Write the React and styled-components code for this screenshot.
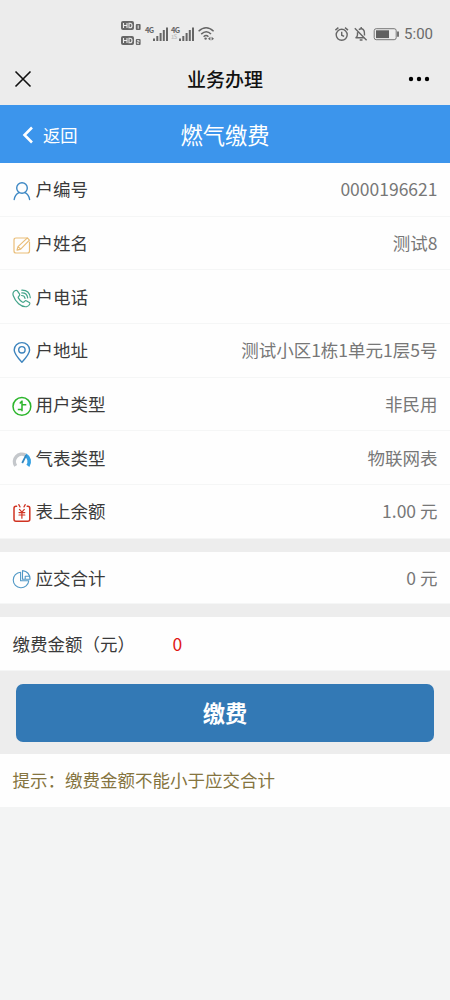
import styled, { createGlobalStyle } from 'styled-components';

const GlobalStyle = createGlobalStyle`
  * {
    box-sizing: border-box;
  }
  body {
    margin: 0;
    background: #f3f4f4;
    font-family: 'Noto Sans CJK SC', sans-serif;
    font-size: 17.5px;
    color: #3a3a3a;
  }
`;

const Page = styled.div`
  width: 100%;
  min-height: 1000px;
  background: #f3f4f4;
`;

const StatusBar = styled.div`
  display: flex;
  align-items: center;
  height: 54px;
  padding: 13px 17px 0 120px;
  background: #ececec;
`;

const StatusSpacer = styled.div`
  flex: 1;
`;

const Clock = styled.span`
  margin-left: 4px;
  font-family: Roboto, sans-serif;
  font-size: 15px;
  line-height: 20px;
  color: #6a6a6a;
`;

const TitleBar = styled.div`
  display: grid;
  grid-template-columns: 60px 1fr 60px;
  align-items: center;
  height: 51px;
  padding: 0 20px 2px 14px;
  background: #ececec;
`;

const PageTitle = styled.h1`
  margin: 0;
  padding-left: 6px;
  font-size: 19px;
  font-weight: 500;
  line-height: 28px;
  text-align: center;
  color: #111;
`;

const MoreIcon = styled.svg`
  justify-self: end;
`;

const Header = styled.header`
  display: grid;
  grid-template-columns: 100px 1fr 100px;
  align-items: center;
  height: 58px;
  background: #3c95ec;
  color: #fff;
`;

const BackButton = styled.a`
  display: flex;
  align-items: center;
  gap: 9px;
  padding: 2px 0 0 22px;
  font-size: 17.3px;
  line-height: 26px;
`;

const HeaderTitle = styled.h2`
  margin: 0;
  font-size: 22.3px;
  font-weight: 400;
  line-height: 32px;
  text-align: center;
`;

const Group = styled.section`
  border-bottom: ${({ $gap }) => $gap || 0}px solid #ededed;
  background: #fefefe;
`;

const Row = styled.div`
  display: flex;
  align-items: center;
  height: ${({ $height }) => $height || 53.7}px;
  padding: 0 12.5px 0 12.6px;
  border-bottom: 1px solid #f5f6f6;
`;

const RowIcon = styled.svg`
  flex: none;
  width: 18px;
  height: 20px;
  margin: 3px 5px 0 0;
  overflow: visible;
  fill: none;
  stroke-linecap: round;
  stroke-linejoin: round;
`;

const Label = styled.span`
  line-height: 26px;
`;

const Value = styled.span`
  margin-left: auto;
  line-height: 26px;
  color: #777;
`;

const Amount = styled.span`
  margin-left: 37.5px;
  line-height: 26px;
  color: #e01714;
`;

const ButtonArea = styled.div`
  padding: 13px 16px 12px;
  background: #ededed;
`;

const PayButton = styled.button`
  display: block;
  width: 100%;
  height: 58px;
  padding: 0;
  border: 0;
  border-radius: 7px;
  background: #3379b5;
  color: #fff;
  font-family: inherit;
  font-size: 22.3px;
  font-weight: 700;
  line-height: 57px;
`;

const Tip = styled.p`
  height: 53px;
  margin: 0;
  padding: 0 12.6px;
  background: #fefefe;
  line-height: 52px;
  color: #85743f;
`;

const SimBadges = () => (
  <svg width="22" height="28" viewBox="0 0 22 28" fill="#666">
    <rect x="1" y="1" width="13" height="9" rx="2" />
    <path d="M3.5 3v5M7 3v5M3.5 5.5H7M9 3.2v4.6h1q2 0 2-2.3t-2-2.3z" fill="none" stroke="#ececec" strokeWidth="1.1" />
    <rect x="15.8" y="4" width="4.8" height="6" rx="1" />
    <path d="M18.2 5.3v3.4" stroke="#ececec" />
    <rect x="1" y="16" width="13" height="9" rx="2" />
    <path d="M3.5 18v5M7 18v5M3.5 20.5H7M9 18.2v4.6h1q2 0 2-2.3t-2-2.3z" fill="none" stroke="#ececec" strokeWidth="1.1" />
    <rect x="15.8" y="19" width="4.8" height="6" rx="1" />
    <path d="M17 20.5h2v1.5h-1.7v1.6H19" fill="none" stroke="#ececec" strokeWidth=".8" />
  </svg>
);

const NetworkTag = styled.span`
  align-self: flex-start;
  width: 8px;
  margin: 12px 0 0 3px;
  font-family: 'Noto Sans CJK SC', sans-serif;
  font-size: 7.5px;
  font-weight: 700;
  line-height: 9px;
  letter-spacing: -0.6px;
  color: #666;
`;

const FaintTag = styled.span`
  display: block;
  font-size: 5.5px;
  line-height: 7px;
  color: #c4c4c4;
`;

const Signal = () => (
  <svg width="15" height="16" viewBox="0 0 15 16" stroke="#666" strokeWidth="2">
    <path d="M1 15v-2.5M4.3 15v-5M7.6 15V7M10.8 15V4M14 15V1.5" />
  </svg>
);

const WifiSvg = styled.svg`
  margin-left: 4px;
`;

const Wifi = () => (
  <WifiSvg width="18" height="15" viewBox="0 0 18 15" fill="none" stroke="#666" strokeWidth="1.5">
    <path d="M.6 5.2q7.5-7 15 0M3.2 8.1q5.2-4.8 9.8 0M5.6 10.7q2.6-2.3 4.8 0" />
    <circle cx="7.6" cy="12.6" r="1.2" fill="#666" stroke="none" />
    <path d="M10 12.7l2.4-1.9v3.8zM16 12.7l-2.4-1.9v3.8z" fill="#666" stroke="none" />
  </WifiSvg>
);

const StatusIcons = () => (
  <svg width="66" height="16" viewBox="0 0 66 16" fill="none" stroke="#666" strokeWidth="1.4">
    <circle cx="7.7" cy="8.8" r="5.5" />
    <path d="M7.7 5.8v3.4l2.4 1.2M1.4 4.1l3-2.5M11 1.6l3 2.5" />
    <path d="M30 11.8h-8.4q1.9-1 1.9-3V6.3M24.8 3.6q3.5-2.2 5.2 1 .6 1.2.5 5M20.8 2.2l11.8 12M25.7 14h2.8M27.2 1v2" />
    <rect x="40.2" y="2.7" width="22" height="11" rx="2" strokeWidth="1" stroke="#777" />
    <rect x="42" y="4.3" width="13" height="7.8" fill="#606060" stroke="none" />
    <path d="M64 5.5v5.3" strokeWidth="1.8" />
  </svg>
);

const icons = {
  user: (
    <g stroke="#3d88c4" strokeWidth="1.4">
      <circle cx="9" cy="7" r="5.3" />
      <path d="M1.2 18.5q.7-5 4.8-6.9M16.6 18.5q-.7-5-4.6-6.9" />
    </g>
  ),
  edit: (
    <g stroke="#e9bd78" strokeWidth="1.2">
      <path d="M14 3H3Q1 3 1 5v11q0 2 2 2h11.5q2 0 2-2V7" />
      <path d="M4 15.2l1-3.6L14.4 2.9l2 2.3-8.7 8.9zM5 11.6l2.7 2.5" />
    </g>
  ),
  phone: (
    <g stroke="#43a48a" strokeWidth="1.2">
      <path d="M2.4 2.5q-3.3 1.8-2.2 5 1.6 4.8 5.4 8.2 4 3.5 8 3 2.3-.4 3.2-2.8.2-.8-.5-1.3l-3.1-1.8q-.8-.4-1.4.3l-1 1q-.7.5-1.5 0-2.7-1.8-4-4.2-.4-.8.3-1.4l.8-.9q.6-.6.2-1.4L4.4 2.8q-.7-.8-2-.3z" />
      <path d="M8.8 2.2q7.6-.2 8.5 7.5M8.8 4.9q5-.2 5.9 4.9M8.6 7.5q2.8 0 3.4 2.8" />
    </g>
  ),
  location: (
    <g stroke="#3d84bd" strokeWidth="1.4">
      <path d="M8.9 20.2Q1.2 12 1.2 8a7.7 7.4 0 0 1 15.4 0q0 4-7.7 12.2z" />
      <circle cx="8.9" cy="7.8" r="3.2" />
    </g>
  ),
  type: (
    <g stroke="#2bb52b" strokeWidth="1.5">
      <circle cx="8.9" cy="10.4" r="8.9" />
      <path d="M9 4.6v10.6M9 8.7h4.3M4.8 13.4H9M9 5L6.8 7.6" strokeLinecap="butt" />
    </g>
  ),
  meter: (
    <g strokeLinecap="butt">
      <path d="M2.7 16.9A7.5 7.5 0 0 1 12.5 6.1" stroke="#c4c7cb" strokeWidth="3.4" />
      <path d="M12.5 6.1a7.5 7.5 0 0 1 2.4 10.8" stroke="#35a0e2" strokeWidth="3.6" />
      <path d="M13.2 6.2L9.2 14" stroke="#3387bf" strokeWidth="1.8" />
    </g>
  ),
  balance: (
    <g stroke="#d03322" strokeWidth="1.5">
      <path d="M3.6 3.3H3q-2 0-2 2v11q0 2 2 2h11.8q2 0 2-2v-11q0-2-2-2h-.6" />
      <path d="M5.8 1.6l1.2 2.3M12.2 1.6L11 3.9M6.5 6.4l2.4 2.8 2.4-2.8M6 9.6h5.8M6 12h5.8M8.9 9.2v6" strokeWidth="1.2" />
    </g>
  ),
  total: (
    <g stroke="#5098c6" strokeWidth="1.1">
      <path d="M7.6 3.2a7.8 7.8 0 1 0 8.2 8.6H7.6z" />
      <path d="M9.5 1.6v8.6h7.6q-.4-7.6-7.6-8.6zM12.2 10V7.2h4" />
    </g>
  )
};

const accountRows = [
  { icon: 'user', label: '户编号', value: '0000196621' },
  { icon: 'edit', label: '户姓名', value: '测试8' },
  { icon: 'phone', label: '户电话', value: '' },
  { icon: 'location', label: '户地址', value: '测试小区1栋1单元1层5号' },
  { icon: 'type', label: '用户类型', value: '非民用' },
  { icon: 'meter', label: '气表类型', value: '物联网表' },
  { icon: 'balance', label: '表上余额', value: '1.00 元' }
];

const InfoRow = ({ icon, label, value, height }) => (
  <Row $height={height}>
    <RowIcon viewBox="0 0 18 20">{icons[icon]}</RowIcon>
    <Label>{label}</Label>
    <Value>{value}</Value>
  </Row>
);

const App = () => (
  <>
    <GlobalStyle />
    <Page>
      <StatusBar>
        <SimBadges />
        <NetworkTag>4G</NetworkTag>
        <Signal />
        <NetworkTag>
          4G
          <FaintTag>1S</FaintTag>
        </NetworkTag>
        <Signal />
        <Wifi />
        <StatusSpacer />
        <StatusIcons />
        <Clock>5:00</Clock>
      </StatusBar>
      <TitleBar>
        <svg width="18" height="18" viewBox="0 0 18 18" stroke="#111" strokeWidth="1.6">
          <path d="M1.5 1.5l15 15M16.5 1.5l-15 15" />
        </svg>
        <PageTitle>业务办理</PageTitle>
        <MoreIcon width="22" height="6" viewBox="0 0 22 6" fill="#000">
          <circle cx="3" cy="3" r="2.2" />
          <circle cx="11" cy="3" r="2.2" />
          <circle cx="19" cy="3" r="2.2" />
        </MoreIcon>
      </TitleBar>
      <Header>
        <BackButton>
          <svg width="12" height="18" viewBox="0 0 12 18" fill="none" stroke="#fff" strokeWidth="2.6">
            <path d="M10 1.5L2.5 9l7.5 7.5" />
          </svg>
          返回
        </BackButton>
        <HeaderTitle>燃气缴费</HeaderTitle>
      </Header>
      <Group $gap={13}>
        {accountRows.map((row) => (
          <InfoRow key={row.icon} {...row} />
        ))}
      </Group>
      <Group $gap={13}>
        <InfoRow icon="total" label="应交合计" value="0 元" height={52.6} />
      </Group>
      <Group>
        <Row $height={53.5}>
          <Label>缴费金额（元）</Label>
          <Amount>0</Amount>
        </Row>
      </Group>
      <ButtonArea>
        <PayButton>缴费</PayButton>
      </ButtonArea>
      <Tip>提示：缴费金额不能小于应交合计</Tip>
    </Page>
  </>
);

export default App;
